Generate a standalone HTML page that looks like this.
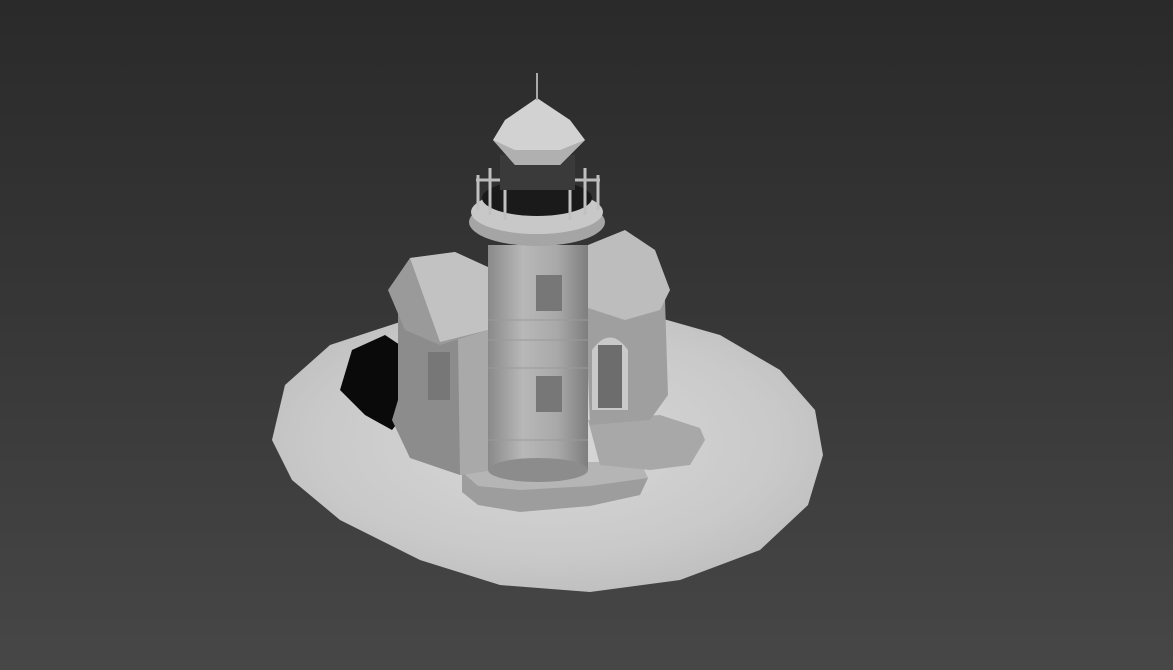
<!DOCTYPE html>
<html><head><meta charset="utf-8"><style>
html,body{margin:0;padding:0;width:1173px;height:670px;overflow:hidden}
body{background:linear-gradient(#2a2a2a 0%,#363636 45%,#474747 100%)}
svg{display:block}
</style></head><body>
<svg width="1173" height="670" viewBox="0 0 1173 670">
<defs>
<radialGradient id="g" cx="0.5" cy="0.45" r="0.6">
<stop offset="0" stop-color="#d8d8d8"/><stop offset="0.7" stop-color="#c9c9c9"/><stop offset="1" stop-color="#bdbdbd"/>
</radialGradient>
<linearGradient id="cyl" x1="0" x2="1">
<stop offset="0" stop-color="#8a8a8a"/><stop offset="0.35" stop-color="#b8b8b8"/><stop offset="0.7" stop-color="#a8a8a8"/><stop offset="1" stop-color="#7e7e7e"/>
</linearGradient>
</defs>
<polygon fill="url(#g)" points="272,440 285,385 330,345 400,322 470,318 560,318 660,318 720,335 780,370 815,410 823,455 808,505 760,550 680,580 590,592 500,585 420,560 340,520 292,480"/>
<polygon fill="#0a0a0a" points="340,390 352,350 385,335 400,345 400,420 392,430 365,415"/>
<!-- base platform -->
<polygon fill="#9d9d9d" points="462,472 490,462 640,462 648,478 640,495 590,506 520,512 478,505 462,492"/>
<polygon fill="#b5b5b5" points="462,472 490,462 640,462 648,478 590,486 520,490 478,486"/>
<!-- right steps -->
<polygon fill="#a8a8a8" points="588,420 660,415 700,428 705,440 690,465 650,470 600,465"/>
<!-- left wing -->
<polygon fill="#8c8c8c" points="398,300 440,320 490,330 492,470 460,475 410,458 392,420 398,400"/>
<polygon fill="#a9a9a9" points="440,320 490,330 492,470 460,475 458,340"/>
<rect x="428" y="352" width="22" height="48" fill="#777"/>
<polygon fill="#9a9a9a" points="388,290 410,258 455,252 490,268 488,330 440,345 405,330"/>
<polygon fill="#c2c2c2" points="410,258 455,252 490,268 488,330 440,342"/>
<!-- right wing -->
<polygon fill="#9f9f9f" points="585,300 665,300 668,395 650,420 590,425"/>
<path d="M592,410 L592,350 Q610,325 628,350 L628,410Z" fill="#c9c9c9"/>
<rect x="598" y="345" width="24" height="63" fill="#6d6d6d"/>
<polygon fill="#bdbdbd" points="588,245 625,230 655,250 670,290 660,310 625,320 588,308"/>
<!-- tower -->
<rect x="488" y="245" width="100" height="225" fill="url(#cyl)"/>
<ellipse cx="538" cy="470" rx="50" ry="12" fill="#8c8c8c"/>
<rect x="536" y="275" width="26" height="36" fill="#777"/>
<rect x="536" y="376" width="26" height="36" fill="#777"/>
<g stroke="#9a9a9a" stroke-width="1" fill="none">
<line x1="488" y1="340" x2="588" y2="340"/><line x1="488" y1="440" x2="588" y2="440"/>
<line x1="488" y1="320" x2="588" y2="320"/><line x1="488" y1="368" x2="588" y2="368"/>
</g>
<!-- balcony -->
<ellipse cx="537" cy="222" rx="68" ry="24" fill="#a5a5a5"/>
<ellipse cx="537" cy="212" rx="66" ry="22" fill="#c8c8c8"/>
<ellipse cx="537" cy="198" rx="55" ry="18" fill="#1a1a1a"/>
<g stroke="#c0c0c0" stroke-width="3">
<line x1="478" y1="175" x2="478" y2="210"/><line x1="490" y1="168" x2="490" y2="215"/>
<line x1="505" y1="165" x2="505" y2="220"/><line x1="570" y1="165" x2="570" y2="220"/>
<line x1="585" y1="168" x2="585" y2="215"/><line x1="598" y1="175" x2="598" y2="210"/>
</g>
<line x1="476" y1="180" x2="600" y2="180" stroke="#bbb" stroke-width="3"/>
<!-- cupola -->
<rect x="500" y="155" width="75" height="35" fill="#3a3a3a"/>
<polygon fill="#d2d2d2" points="493,140 505,120 537,98 570,120 585,140 560,165 515,165"/>
<polygon fill="#b0b0b0" points="493,140 515,165 560,165 585,140 560,150 515,150"/>
<line x1="537" y1="73" x2="537" y2="100" stroke="#aaa" stroke-width="2"/>
</svg>
</body></html>
